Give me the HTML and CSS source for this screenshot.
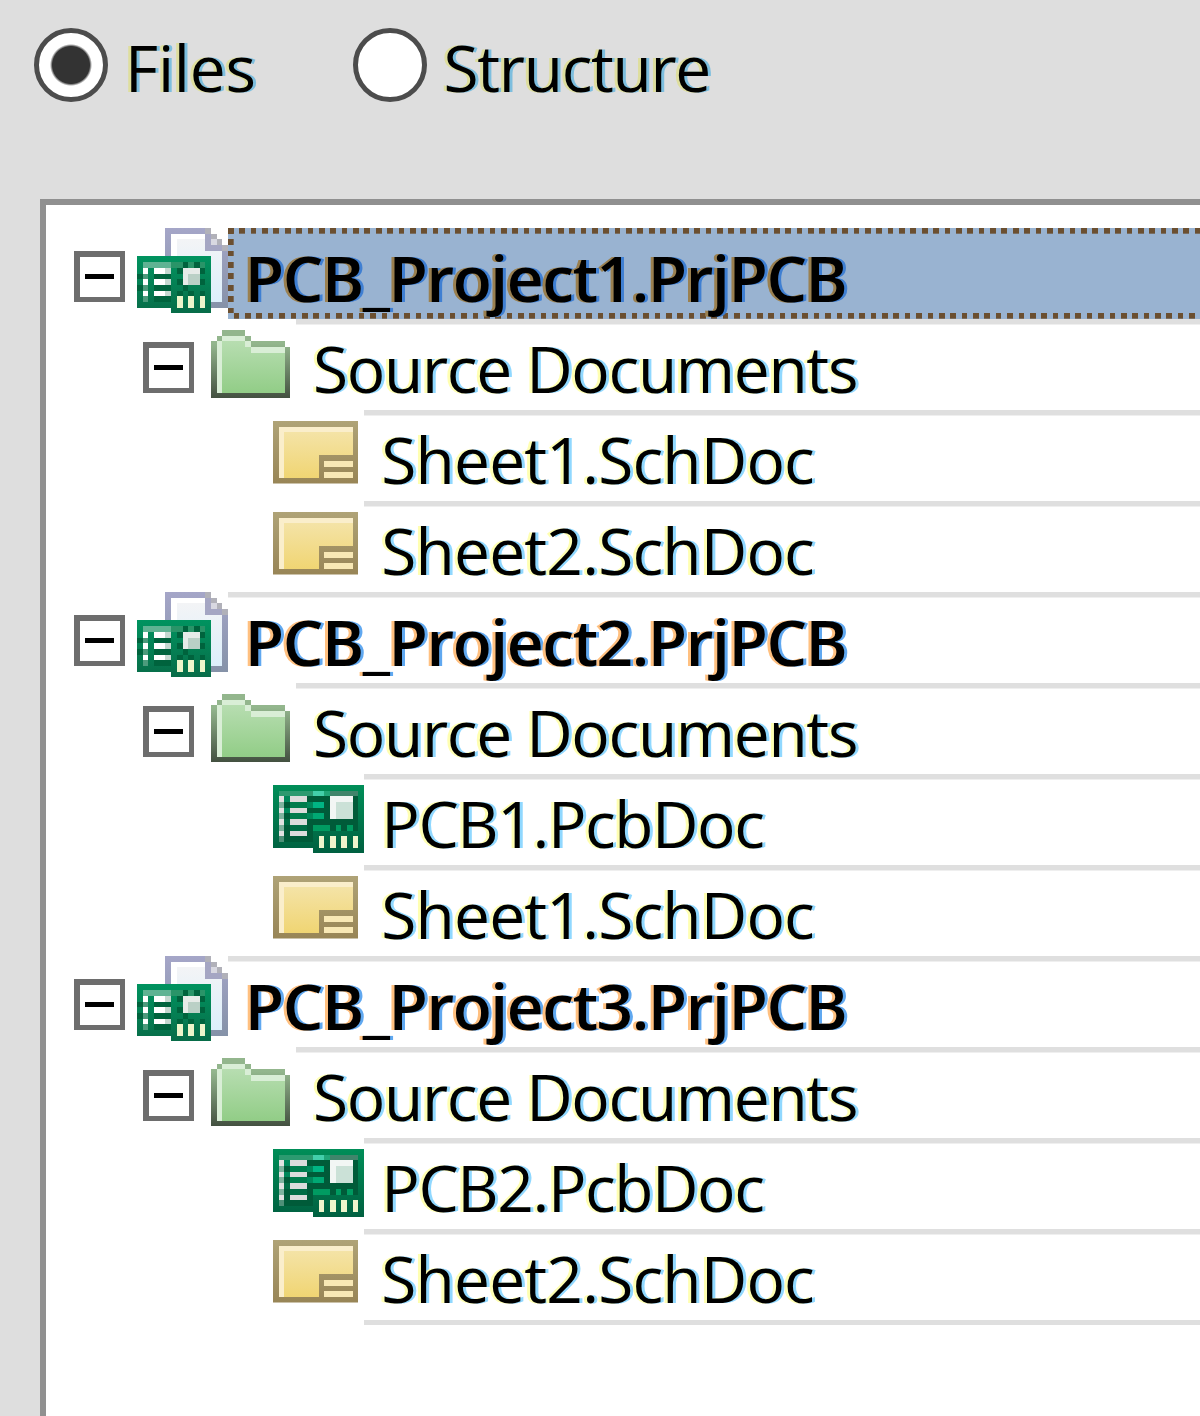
FILE: index.html
```html
<!DOCTYPE html>
<html lang="en">
<head>
    <meta charset="UTF-8">
    <meta name="viewport" content="width=device-width, initial-scale=1.0">
    <title>Projects</title>
    <link rel="stylesheet" href="styles.css">
</head>
<body>

    <svg class="sprites" width="0" height="0">
        <defs>
            <linearGradient id="folder-fill" x1="0" y1="0" x2="0" y2="1">
                <stop offset="0" stop-color="#bbdfb5"/>
                <stop offset="1" stop-color="#92cd87"/>
            </linearGradient>
            <linearGradient id="folder-edge" x1="0" y1="0" x2="0" y2="1">
                <stop offset="0.2" stop-color="#93b68d"/>
                <stop offset="1" stop-color="#435040"/>
            </linearGradient>
            <linearGradient id="sheet-fill" x1="0" y1="0" x2="0" y2="1">
                <stop offset="0" stop-color="#f4e3a6"/>
                <stop offset="1" stop-color="#f0d573"/>
            </linearGradient>
            <linearGradient id="sheet-edge" x1="0" y1="0" x2="0" y2="1">
                <stop offset="0" stop-color="#afa377"/>
                <stop offset="1" stop-color="#988556"/>
            </linearGradient>
            <linearGradient id="page-fill" x1="0" y1="0" x2="0" y2="1">
                <stop offset="0" stop-color="#f3f4f6"/>
                <stop offset="1" stop-color="#dceffb"/>
            </linearGradient>
            <linearGradient id="page-edge" x1="0" y1="0" x2="0" y2="1">
                <stop offset="0" stop-color="#a5a6c8"/>
                <stop offset="1" stop-color="#8592a8"/>
            </linearGradient>
            <linearGradient id="board" x1="0" y1="0" x2="0" y2="1">
                <stop offset="0" stop-color="#00935f"/>
                <stop offset="1" stop-color="#086c48"/>
            </linearGradient>
            <linearGradient id="board-dark" x1="0" y1="0" x2="0" y2="1">
                <stop offset="0" stop-color="#008e58"/>
                <stop offset="1" stop-color="#006040"/>
            </linearGradient>
        </defs>

        <symbol id="icon-project" viewBox="0 0 16 15">
            <path fill="url(#page-edge)" d="M5 0h8v1h1v1h1v1h1v11H5z"/>
            <path fill="#fff" d="M6 1h6v3h3v9H6z"/>
            <path fill="url(#page-fill)" d="M7 2h5v2h3v9H7z"/>
            <path fill="#a5a6c3" d="M12 1h1v2h2v1h-3z"/>
            <path fill="#b1b1b9" d="M12 0h1v1h1v1h1v1h1v1h-1V3h-1V2h-1V1h-1z"/>
            <path fill="#d8d8e1" d="M13 2h1v1h-1z"/>
            <path fill="url(#board)" d="M0 5h13v10H6v-1H0z"/>
            <path fill="#5fb393" d="M1 6h5v1H1z"/>
            <path fill="#299468" d="M6 6h6v1H6z"/>
            <path fill="#00633d" d="M8 6h1v1H8zM10 6h1v1h-1zM7 7h1v1H7zM11 7h1v1h-1zM0 8h1v1H0zM3 8h3v1H3zM7 9h1v1H7zM11 9h1v1h-1zM0 10h1v1H0zM3 10h3v1H3zM8 10h1v1H8zM7 11h1v1H7zM9 11h1v1H9zM11 11h1v1h-1zM3 12h3v1H3z"/>
            <path fill="#fff" d="M1 7h1v1H1zM3 7h2v1H3zM1 9h1v1H1zM3 9h2v1H3zM1 11h1v1H1zM3 11h2v1H3z"/>
            <path fill="#c5d8d0" d="M5 7h1v1H5zM5 9h1v1H5zM5 11h1v1H5z"/>
            <path fill="#4c9b7c" d="M1 8h1v1H1zM1 10h1v1H1zM1 12h1v1H1z"/>
            <path fill="#e6ebe8" d="M8 7h3v3H8z"/>
            <path fill="#bad0c6" d="M9 8h2v2H9z"/>
            <path fill="#eef5cb" d="M7 12h1v2H7zM9 12h1v2H9zM11 12h1v2h-1z"/>
        </symbol>

        <symbol id="icon-folder" viewBox="0 0 14 12">
            <path fill="url(#folder-edge)" d="M2 0h4v1h1v1h6v1h1v9H0V2h1V1h1z"/>
            <path fill="url(#folder-fill)" d="M1 2h1V1h4v1h1v1h6v8H1z"/>
            <path fill="#d9eed6" d="M1 2h1V1h4v1h1v1h6v1H7V3H6V2H2v9H1z"/>
        </symbol>

        <symbol id="icon-sheet" viewBox="0 0 15 11">
            <path fill="url(#sheet-edge)" d="M0 0h15v11H0z"/>
            <path fill="url(#sheet-fill)" d="M2 2h12v4H8v4H2z"/>
            <path fill="#faeecb" d="M1 1h13v1H2v8H1z"/>
            <path fill="#f8e8b5" d="M9 7h5v1H9zM9 9h5v1H9z"/>
        </symbol>

        <symbol id="icon-pcb" viewBox="0 0 16 12">
            <path fill="url(#board-dark)" d="M0 0h16v12H7v-1H0z"/>
            <path fill="#005b39" d="M2 2h13v6H7v2H2z"/>
            <path fill="#2c9a70" d="M1 1h6v1H1z"/>
            <path fill="#43cfaa" d="M7 1h2v1H7z"/>
            <path fill="#20a577" d="M9 1h1v1H9z"/>
            <path fill="#40856b" d="M10 1h5v1h-5z"/>
            <path fill="#00875a" d="M2 2h1v1H2zM2 4h1v1H2zM6 3h1v1H6zM6 5h1v1H6z"/>
            <path fill="#e2e2e2" d="M1 2h1v1H1zM1 4h1v1H1zM1 6h1v1H1zM1 8h1v1H1z"/>
            <path fill="#7fb39f" d="M1 3h1v1H1zM1 5h1v1H1zM1 7h1v1H1z"/>
            <path fill="#4e9078" d="M1 9h1v1H1z"/>
            <path fill="#dcdcdc" d="M3 2h3v1H3zM3 4h3v1H3zM3 6h3v1H3zM3 8h3v1H3z"/>
            <path fill="#007c4d" d="M3 3h3v1H3zM3 5h3v1H3z"/>
            <path fill="#006c45" d="M2 6h1v1H2zM3 7h3v1H3z"/>
            <path fill="#00b584" d="M7 3h2v1H7z"/>
            <path fill="#00a873" d="M7 5h2v1H7z"/>
            <path fill="#009b61" d="M7 7h3v1H7zM11 7h1v1h-1zM13 7h1v1h-1z"/>
            <path fill="#f2f6f4" d="M10 2h4v4h-4z"/>
            <path fill="#cbe1d7" d="M11 3h3v3h-3z"/>
            <path fill="#eff5cc" d="M8 9h1v2H8zM10 9h1v2h-1zM12 9h1v2h-1zM14 9h1v2h-1z"/>
        </symbol>

        <symbol id="icon-collapse" viewBox="0 0 9 9">
            <path fill="#6d6d6d" d="M0 0h9v9H0z"/>
            <path fill="#fff" d="M1 1h7v7H1z"/>
            <path fill="#000" d="M2 4h5v1H2z"/>
        </symbol>
    </svg>

    <div class="view-switch">
        <label class="option files"><span class="radio checked"></span><span class="option-text">Files</span></label>
        <label class="option structure"><span class="radio"></span><span class="option-text">Structure</span></label>
    </div>

    <div class="tree">
        <div class="row project selected">
            <svg class="toggle"><use href="#icon-collapse"/></svg>
            <svg class="icon"><use href="#icon-project"/></svg>
            <div class="name"><span>PCB_Project1.PrjPCB</span></div>
        </div>
        <div class="row folder">
            <svg class="toggle"><use href="#icon-collapse"/></svg>
            <svg class="icon"><use href="#icon-folder"/></svg>
            <div class="name"><span>Source Documents</span></div>
        </div>
        <div class="row sheet">
            <svg class="icon"><use href="#icon-sheet"/></svg>
            <div class="name"><span>Sheet1.SchDoc</span></div>
        </div>
        <div class="row sheet">
            <svg class="icon"><use href="#icon-sheet"/></svg>
            <div class="name"><span>Sheet2.SchDoc</span></div>
        </div>

        <div class="row project">
            <svg class="toggle"><use href="#icon-collapse"/></svg>
            <svg class="icon"><use href="#icon-project"/></svg>
            <div class="name"><span>PCB_Project2.PrjPCB</span></div>
        </div>
        <div class="row folder">
            <svg class="toggle"><use href="#icon-collapse"/></svg>
            <svg class="icon"><use href="#icon-folder"/></svg>
            <div class="name"><span>Source Documents</span></div>
        </div>
        <div class="row pcb">
            <svg class="icon"><use href="#icon-pcb"/></svg>
            <div class="name"><span>PCB1.PcbDoc</span></div>
        </div>
        <div class="row sheet">
            <svg class="icon"><use href="#icon-sheet"/></svg>
            <div class="name"><span>Sheet1.SchDoc</span></div>
        </div>

        <div class="row project">
            <svg class="toggle"><use href="#icon-collapse"/></svg>
            <svg class="icon"><use href="#icon-project"/></svg>
            <div class="name"><span>PCB_Project3.PrjPCB</span></div>
        </div>
        <div class="row folder">
            <svg class="toggle"><use href="#icon-collapse"/></svg>
            <svg class="icon"><use href="#icon-folder"/></svg>
            <div class="name"><span>Source Documents</span></div>
        </div>
        <div class="row pcb">
            <svg class="icon"><use href="#icon-pcb"/></svg>
            <div class="name"><span>PCB2.PcbDoc</span></div>
        </div>
        <div class="row sheet">
            <svg class="icon"><use href="#icon-sheet"/></svg>
            <div class="name"><span>Sheet2.SchDoc</span></div>
        </div>
        <div class="tree-end"></div>
    </div>

</body>
</html>
```

FILE: styles.css
```css
/* everything sits on a grid of 5.6875px cells */
:root {
    --u: 5.6875px;
}

* {
    box-sizing: border-box;
}

body {
    margin: 0;
    height: 1416px;
    overflow: hidden;
    display: flex;
    flex-direction: column;
    background-color: #dedede;
    color: black;
    font-family: "Open Sans", "Noto Sans", sans-serif;
    font-size: 64px;
    line-height: 91px;
}

.sprites {
    position: absolute;
}

.view-switch {
    display: flex;
    height: calc(var(--u) * 35);
    padding: calc(var(--u) * 5) 0 0 calc(var(--u) * 6);
}

.option {
    display: flex;
    height: calc(var(--u) * 13);
}

.files {
    width: calc(var(--u) * 56);
}

.radio {
    width: calc(var(--u) * 13);
    height: calc(var(--u) * 13);
    border: 5.2px solid #4c4c4c;
    border-radius: 50%;
    background-color: white;
}

.checked {
    background-image: radial-gradient(circle, #333 0, #333 18.5px, white 21px);
}

.option-text {
    margin: -6px 0 0 17px;
    letter-spacing: -1.3px;
    white-space: nowrap;
    text-shadow: -3px 0 #dede9e, 3px 0 #7dbede;
}

.files .option-text {
    letter-spacing: -0.2px;
}

.tree {
    flex: 1;
    margin-left: calc(var(--u) * 7);
    padding-top: 22.7px;
    border-top: 6px solid #909090;
    border-left: 6px solid #909090;
    background-color: white;
}

.row {
    display: flex;
    height: 91px;
}

.row svg {
    flex: none;
    shape-rendering: crispEdges;
}

.toggle {
    width: calc(var(--u) * 9);
    height: calc(var(--u) * 9);
    margin-top: calc(var(--u) * 4);
}

.project {
    padding-left: calc(var(--u) * 5);
}

.project .icon {
    width: calc(var(--u) * 16);
    height: calc(var(--u) * 15);
    margin-left: calc(var(--u) * 2);
}

.folder {
    padding-left: calc(var(--u) * 17);
}

.folder .icon {
    width: calc(var(--u) * 14);
    height: calc(var(--u) * 12);
    margin: calc(var(--u) * 2) var(--u) 0 calc(var(--u) * 3);
}

.sheet, .pcb {
    padding-left: calc(var(--u) * 40);
}

.sheet .icon {
    width: calc(var(--u) * 15);
    height: calc(var(--u) * 11);
    margin: calc(var(--u) * 2) var(--u) 0 0;
}

.pcb .icon {
    width: calc(var(--u) * 16);
    height: calc(var(--u) * 12);
    margin-top: calc(var(--u) * 2);
}

.name {
    flex: 1;
    height: 91px;
    padding-left: 17px;
    background: linear-gradient(#dfdfdf, #dfdfdf) no-repeat 0 0 / 100% 5.5px;
    letter-spacing: -1.3px;
    white-space: nowrap;
    text-shadow: -3px 0 #ffffb2, 3px 0 #90d8ff;
}

.name span {
    position: relative;
    top: 4px;
}

.sheet .name {
    letter-spacing: -0.8px;
}

.pcb .name {
    letter-spacing: -1.4px;
}

.project .name {
    font-weight: 600;
    letter-spacing: -1.4px;
    text-shadow: -3px 0 #ffc080, 3px 0 #60a8f0;
}

/* dotted focus rectangle */
.selected .name {
    background:
        repeating-linear-gradient(90deg, #6b4f30 0, #6b4f30 5.6875px, #99b3d1 5.6875px, #99b3d1 11.375px) 0 0 / 100% 5.6875px no-repeat,
        repeating-linear-gradient(90deg, #99b3d1 0, #99b3d1 5.6875px, #6b4f30 5.6875px, #6b4f30 11.375px) 0 100% / 100% 5.6875px no-repeat,
        repeating-linear-gradient(#6b4f30 0, #6b4f30 5.6875px, #99b3d1 5.6875px, #99b3d1 11.375px) 0 0 / 5.6875px 100% no-repeat,
        #99b3d1;
    text-shadow: -3px 0 #9a8050, 3px 0 #3f7fd2;
}

.tree-end {
    height: 5.5px;
    margin-left: calc(var(--u) * 56);
    background-color: #dfdfdf;
}
```
